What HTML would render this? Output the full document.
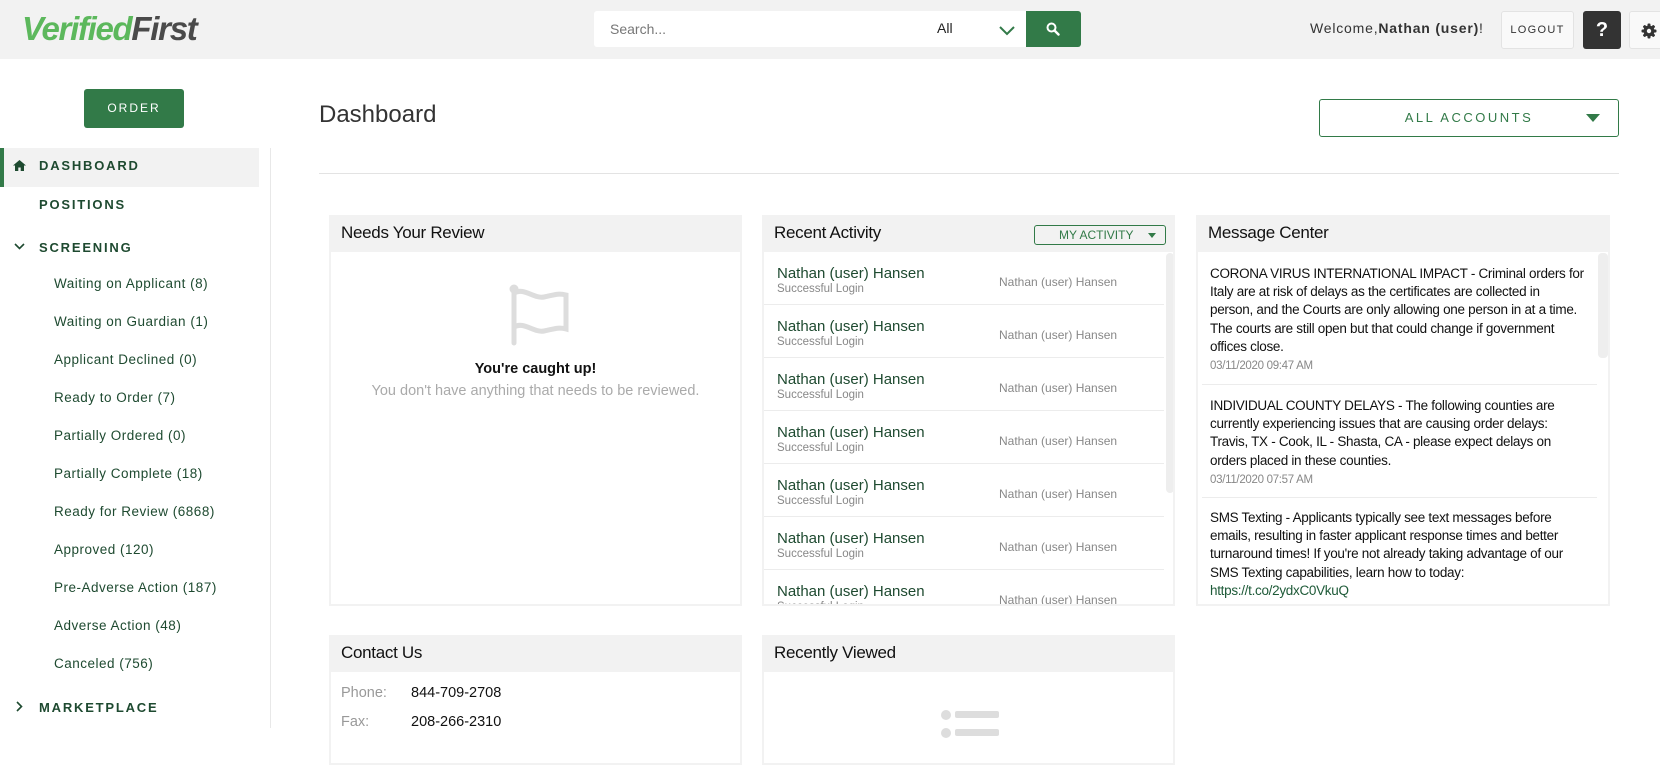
<!DOCTYPE html>
<html><head><meta charset="utf-8">
<style>
*{box-sizing:border-box;margin:0;padding:0}
body{width:1660px;height:735px;overflow:hidden;background:#fff;font-family:"Liberation Sans",sans-serif;color:#222;position:relative}
.abs{position:absolute}
.hdr{left:0;top:0;width:1660px;height:59px;background:#f2f2f2}
.logo{left:22px;top:10px;font-size:33px;font-weight:bold;font-style:italic;letter-spacing:-1.3px}
.logo .v{color:#5cb85c}.logo .f{color:#4a4a4a}
.search{left:594px;top:11px;width:432px;height:36px;background:#fff;border-radius:3px 0 0 3px}
.search .ph{position:absolute;left:16px;top:10px;font-size:14px;color:#777}
.search .all{position:absolute;left:343px;top:9px;font-size:14px;color:#222}
.sbtn{left:1026px;top:11px;width:55px;height:36px;background:#327a48;border-radius:0 3px 3px 0}
.welcome{left:1310px;top:20px;font-size:14px;color:#333;letter-spacing:.8px}
.logout{left:1501px;top:11px;width:73px;height:38px;background:#f9f9f9;border:1px solid #e3e3e3;border-radius:3px;font-size:11px;letter-spacing:1.3px;color:#333;text-align:center;line-height:36px}
.help{left:1583px;top:11px;width:38px;height:38px;background:#333;border-radius:3px;color:#fff;font-weight:bold;font-size:20px;text-align:center;line-height:38px}
.gear{left:1629px;top:11px;width:40px;height:38px;background:#f9f9f9;border:1px solid #e3e3e3;border-radius:3px}
.order{left:84px;top:89px;width:100px;height:39px;background:#327a48;border-radius:3px;color:#fff;font-size:12px;letter-spacing:2px;text-align:center;line-height:39px}
.side-active{left:0;top:148px;width:259px;height:39px;background:#f2f2f2;border-left:4px solid #327a48}
.sideline{left:270px;top:148px;width:1px;height:580px;background:#e8e8e8}
.nav{font-size:13px;font-weight:bold;letter-spacing:1.8px;color:#1e4a30}
.sub{font-size:13.5px;color:#1e4a30;letter-spacing:.5px;left:54px}
.title{left:319px;top:101px;font-size:24px;color:#333}
.accts{left:1319px;top:99px;width:300px;height:38px;border:1px solid #327a48;border-radius:3px;color:#327a48;font-size:13px;letter-spacing:2.5px;text-align:center;line-height:36px}
.divider{left:319px;top:173px;width:1300px;height:1px;background:#e3e3e3}
.panel{border:2px solid #f2f2f2;background:#fff;overflow:hidden}
.ph2{height:35px;background:#f2f2f2;font-size:17px;color:#111;padding:6px 10px;letter-spacing:-.3px}
.ra{position:absolute;left:0;width:400px;height:53px;border-bottom:1px solid #ececec}
.ra .n{position:absolute;left:13px;top:13px;font-size:15px;color:#1e4a30}
.ra .s{position:absolute;left:13px;top:31px;font-size:11.5px;color:#888}
.ra .r{position:absolute;left:235px;top:23px;font-size:12px;color:#888}
.msg{position:absolute;left:12px;width:374px;font-size:13.5px;line-height:18.2px;color:#111;letter-spacing:-.3px}
.msg .d{color:#888;font-size:11.5px}
</style></head><body>
<div class="abs hdr"></div>
<div class="abs logo"><span class="v">Verified</span><span class="f">First</span></div>
<div class="abs search"><span class="ph">Search...</span><span class="all">All</span>
<svg style="position:absolute;left:405px;top:15px" width="16" height="10" viewBox="0 0 16 10"><path d="M1 1l7 7 7-7" fill="none" stroke="#327a48" stroke-width="2"/></svg></div>
<div class="abs sbtn"><svg style="position:absolute;left:20px;top:11px" width="14" height="14" viewBox="0 0 14 14"><circle cx="5.5" cy="5.5" r="4" fill="none" stroke="#fff" stroke-width="2"/><path d="M8.5 8.5l4 4" stroke="#fff" stroke-width="2.4" stroke-linecap="round"/></svg></div>
<div class="abs welcome">Welcome,<b>Nathan (user)</b>!</div>
<div class="abs logout">LOGOUT</div>
<div class="abs help">?</div>
<div class="abs gear"><svg style="position:absolute;left:11px;top:11px" width="16" height="16" viewBox="0 0 16 16"><g fill="#333"><circle cx="8" cy="8" r="5.5"/><rect x="6.5" y="0.5" width="3" height="15" rx="1"/><rect x="0.5" y="6.5" width="15" height="3" rx="1"/><rect x="6.5" y="0.5" width="3" height="15" rx="1" transform="rotate(45 8 8)"/><rect x="6.5" y="0.5" width="3" height="15" rx="1" transform="rotate(-45 8 8)"/></g><circle cx="8" cy="8" r="2.2" fill="#f9f9f9"/></svg></div>

<div class="abs order">ORDER</div>
<div class="abs side-active"></div>
<div class="abs sideline"></div>
<svg class="abs" style="left:13px;top:160px" width="13" height="11" viewBox="0 0 13 11"><path d="M6.5 0L0 5.5h2V11h3.3V7.5h2.4V11H11V5.5h2z" fill="#1e4a30"/></svg>
<div class="abs nav" style="left:39px;top:158px">DASHBOARD</div>
<div class="abs nav" style="left:39px;top:197px">POSITIONS</div>
<svg class="abs" style="left:14px;top:243px" width="11" height="8" viewBox="0 0 11 8"><path d="M1 1l4.5 4.5L10 1" fill="none" stroke="#1e4a30" stroke-width="1.6"/></svg>
<div class="abs nav" style="left:39px;top:240px">SCREENING</div>
<div class="abs sub" style="top:276px">Waiting on Applicant (8)</div>
<div class="abs sub" style="top:314px">Waiting on Guardian (1)</div>
<div class="abs sub" style="top:352px">Applicant Declined (0)</div>
<div class="abs sub" style="top:390px">Ready to Order (7)</div>
<div class="abs sub" style="top:428px">Partially Ordered (0)</div>
<div class="abs sub" style="top:466px">Partially Complete (18)</div>
<div class="abs sub" style="top:504px">Ready for Review (6868)</div>
<div class="abs sub" style="top:542px">Approved (120)</div>
<div class="abs sub" style="top:580px">Pre-Adverse Action (187)</div>
<div class="abs sub" style="top:618px">Adverse Action (48)</div>
<div class="abs sub" style="top:656px">Canceled (756)</div>
<svg class="abs" style="left:16px;top:701px" width="7" height="11" viewBox="0 0 7 11"><path d="M1 1l4.5 4.5L1 10" fill="none" stroke="#1e4a30" stroke-width="1.6"/></svg>
<div class="abs nav" style="left:39px;top:700px">MARKETPLACE</div>

<div class="abs title">Dashboard</div>
<div class="abs accts">ALL ACCOUNTS<svg style="position:absolute;right:18px;top:14px" width="14" height="8" viewBox="0 0 14 8"><path d="M0 0h14L7 8z" fill="#327a48"/></svg></div>
<div class="abs divider"></div>

<div class="abs panel" style="left:329px;top:215px;width:413px;height:391px">
<div class="ph2">Needs Your Review</div>
<svg style="position:absolute;left:176px;top:66px" width="64" height="64" viewBox="0 0 64 64"><g fill="none" stroke="#ddd" stroke-width="5" stroke-linecap="round"><path d="M7 6v54"/><path d="M7 10c10-6 20 6 30 4s14-4 22-2v34c-8-2-12 0-22 2s-20-10-30-4"/></g><circle cx="7" cy="6" r="4.5" fill="#ddd"/></svg>
<div style="position:absolute;left:0;width:409px;top:144px;text-align:center;font-weight:bold;font-size:14.5px;color:#111">You're caught up!</div>
<div style="position:absolute;left:0;width:409px;top:166px;text-align:center;font-size:14.5px;color:#aaa">You don't have anything that needs to be reviewed.</div>
</div>

<div class="abs panel" style="left:762px;top:215px;width:413px;height:391px">
<div class="ph2">Recent Activity</div>
<div style="position:absolute;left:270px;top:8px;width:132px;height:20px;border:1px solid #327a48;border-radius:3px;font-size:12px;color:#327a48;padding:2px 0 0 24px">MY ACTIVITY<svg style="position:absolute;right:9px;top:7px" width="8" height="5" viewBox="0 0 8 5"><path d="M0 0h8L4 5z" fill="#327a48"/></svg></div>
<div style="position:absolute;left:402px;top:36px;width:8px;height:240px;background:#eee;border-radius:4px"></div>
<div style="position:absolute;left:0;top:35px">
<div class="ra" style="top:0"><span class="n">Nathan (user) Hansen</span><span class="s">Successful Login</span><span class="r">Nathan (user) Hansen</span></div>
<div class="ra" style="top:53px"><span class="n">Nathan (user) Hansen</span><span class="s">Successful Login</span><span class="r">Nathan (user) Hansen</span></div>
<div class="ra" style="top:106px"><span class="n">Nathan (user) Hansen</span><span class="s">Successful Login</span><span class="r">Nathan (user) Hansen</span></div>
<div class="ra" style="top:159px"><span class="n">Nathan (user) Hansen</span><span class="s">Successful Login</span><span class="r">Nathan (user) Hansen</span></div>
<div class="ra" style="top:212px"><span class="n">Nathan (user) Hansen</span><span class="s">Successful Login</span><span class="r">Nathan (user) Hansen</span></div>
<div class="ra" style="top:265px"><span class="n">Nathan (user) Hansen</span><span class="s">Successful Login</span><span class="r">Nathan (user) Hansen</span></div>
<div class="ra" style="top:318px"><span class="n">Nathan (user) Hansen</span><span class="s">Successful Login</span><span class="r">Nathan (user) Hansen</span></div>
</div>
</div>

<div class="abs panel" style="left:1196px;top:215px;width:414px;height:391px">
<div class="ph2">Message Center</div>
<div style="position:absolute;left:400px;top:36px;width:10px;height:105px;background:#eee;border-radius:4px"></div>
<div class="msg" style="top:48px">CORONA VIRUS INTERNATIONAL IMPACT - Criminal orders for Italy are at risk of delays as the certificates are collected in person, and the Courts are only allowing one person in at a time. The courts are still open but that could change if government offices close.<br><span class="d">03/11/2020 09:47 AM</span></div>
<div style="position:absolute;left:4px;top:167px;width:395px;height:1px;background:#ececec"></div>
<div class="msg" style="top:180px">INDIVIDUAL COUNTY DELAYS - The following counties are currently experiencing issues that are causing order delays: Travis, TX - Cook, IL - Shasta, CA - please expect delays on orders placed in these counties.<br><span class="d">03/11/2020 07:57 AM</span></div>
<div style="position:absolute;left:4px;top:280px;width:395px;height:1px;background:#ececec"></div>
<div class="msg" style="top:292px">SMS Texting - Applicants typically see text messages before emails, resulting in faster applicant response times and better turnaround times! If you're not already taking advantage of our SMS Texting capabilities, learn how to today: <span style="color:#1e5a38">https://t.co/2ydxC0VkuQ</span></div>
</div>

<div class="abs panel" style="left:329px;top:635px;width:413px;height:130px">
<div class="ph2">Contact Us</div>
<div style="position:absolute;left:10px;top:48px;font-size:14.5px;color:#999">Phone:</div>
<div style="position:absolute;left:80px;top:48px;font-size:14.5px;color:#111">844-709-2708</div>
<div style="position:absolute;left:10px;top:77px;font-size:14.5px;color:#999">Fax:</div>
<div style="position:absolute;left:80px;top:77px;font-size:14.5px;color:#111">208-266-2310</div>
</div>

<div class="abs panel" style="left:762px;top:635px;width:413px;height:130px">
<div class="ph2">Recently Viewed</div>
<svg style="position:absolute;left:176px;top:73px" width="60" height="30" viewBox="0 0 60 30"><g fill="#ddd"><circle cx="6" cy="5" r="5"/><rect x="15" y="1" width="44" height="7" rx="2"/><circle cx="6" cy="23" r="5"/><rect x="15" y="19" width="44" height="7" rx="2"/></g></svg>
</div>
</body></html>
